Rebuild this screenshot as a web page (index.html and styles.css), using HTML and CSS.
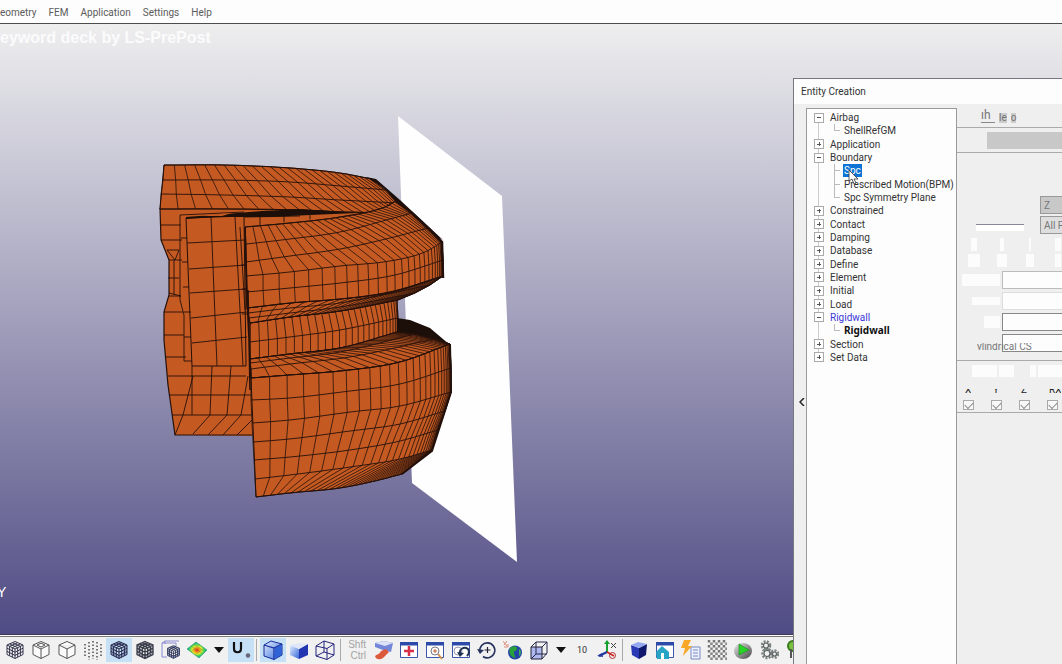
FILE: index.html
```html
<!DOCTYPE html>
<html lang="en">
<head>
<meta charset="utf-8">
<title>LS-PrePost</title>
<link rel="stylesheet" href="styles.css">
</head>
<body>
<nav class="menubar">
  <button class="menu-item">eometry</button>
  <button class="menu-item">FEM</button>
  <button class="menu-item">Application</button>
  <button class="menu-item">Settings</button>
  <button class="menu-item">Help</button>
</nav>

<main class="viewport">
  <h1 class="deck-title">eyword deck by LS-PrePost</h1>
  <svg class="model" id="model" width="560" height="560" viewBox="0 24 560 560" role="img" aria-label="Meshed part and rigid wall"></svg>
  <span class="axis-label">Y</span>
</main>

<svg class="defs" aria-hidden="true">
  <defs>
    <linearGradient id="blueFace" x1="0" y1="0" x2="1" y2="1"><stop offset="0" stop-color="#e4efff"/><stop offset="1" stop-color="#3568d8"/></linearGradient>
    <radialGradient id="fringe"><stop offset="0" stop-color="#f02010"/><stop offset=".3" stop-color="#f8a020"/><stop offset=".5" stop-color="#d8ec30"/><stop offset=".75" stop-color="#30d060"/><stop offset="1" stop-color="#2090e0"/></radialGradient>
    <linearGradient id="orb" x1="0" y1="0" x2="1" y2="1"><stop offset="0" stop-color="#e8e8e8"/><stop offset="1" stop-color="#444"/></linearGradient>
    <symbol id="cube" viewBox="0 0 20 20"><path d="M10 1.5 18 5v9.500L10 18.500 2 14.500V5zM2 5l8 4 8-4M10 9v9.500"/></symbol>
    <symbol id="grid" viewBox="0 0 20 20"><path d="M10 1.500 18 5v9.500L10 18.500 2 14.500V5zM2 5l8 4 8-4M10 9v9.500M4.600 6.300v9.500M7.300 7.700v9.500M12.700 7.700v9.500M15.400 6.300v9.500M2 8.200l8 4 8-4M2 11.400l8 4 8-4M7.300 2.700l8 3.600M4.600 3.900l8 3.700M12.700 2.700l-8 3.600M15.400 3.900l-8 3.700"/></symbol>
    <symbol id="win" viewBox="0 0 20 20"><path d="M1.500 2.500h17v15h-17z" fill="#fff" stroke="#3c55a8"/><path d="M1 2h18v3.500H1z" fill="#2c4aa8" stroke="none"/></symbol>
  </defs>
</svg>

<footer class="toolbar">
  <button class="tool" aria-label="Mesh"><svg class="ico ink"><use href="#grid"/></svg></button>
  <button class="tool" aria-label="Feature edges"><svg class="ico grey" viewBox="0 0 20 20"><path d="M10 1.500 18 5v9.500L10 18.500 2 14.500V5zM2 5l8 4 8-4M10 9v9.500M6 5l4-1.800L14 5l-4 2z"/></svg></button>
  <button class="tool" aria-label="Hidden line"><svg class="ico grey"><use href="#cube"/></svg></button>
  <button class="tool" aria-label="Nodes"><svg class="ico dots" viewBox="0 0 20 20"><path d="M2 4v14M6 2v18M10 1v18M14 2v18M18 4v14"/></svg></button>
  <button class="tool active" aria-label="Shaded mesh"><svg class="ico shade"><use href="#grid"/></svg></button>
  <button class="tool" aria-label="Shrunk elements"><svg class="ico shade-dark"><use href="#grid"/></svg></button>
  <button class="tool" aria-label="Transparent mesh"><svg class="ico shade" viewBox="0 0 20 20"><path d="M1 17V3l3-2h14M1 3h14v3M4 1v3M1 17h5" fill="none" stroke="#8a8cd0"/><use href="#grid" x="5" y="4" width="15" height="16"/></svg></button>
  <button class="tool" aria-label="Fringe"><svg class="ico" viewBox="0 0 20 20"><path d="M0 9 9 2l11 8-8 8z" fill="url(#fringe)" stroke="#309860" stroke-width=".6"/><path d="m4 6 12 8M7 4l11 8M4 12l9-8M8 15l9-7" stroke="#3a8050" stroke-width=".3"/></svg></button>
  <button class="tool narrow" aria-label="More"><svg class="caret" viewBox="0 0 10 6"><path d="M0 0h10L5 6z"/></svg></button>
  <button class="tool active" aria-label="Unreference"><svg class="ico" viewBox="0 0 20 20"><path d="M3 2v6.500c0 5 7 5 7 0V2" fill="none" stroke="#111" stroke-width="2.200"/><circle cx="17" cy="15.500" r="2.200" fill="#667"/></svg></button>
  <span class="sep"></span>
  <button class="tool active" aria-label="Perspective"><svg class="ico" viewBox="0 0 20 20"><path d="M1 5 8 1l11 3v11l-8 4.500L1 16z" fill="url(#blueFace)" stroke="#152a9a"/><path d="m1 5 10 3 8-4-8 4v11.500" fill="none" stroke="#152a9a" stroke-width="1.200"/><path d="m11.500 8.500 7-4v10.500l-7 4z" fill="#2f63d6"/></svg></button>
  <button class="tool" aria-label="Solid"><svg class="ico" viewBox="0 0 20 20"><path d="m1 5 9 4v10l-9-4z" fill="url(#blueFace)"/><path d="m10 9 9-5v11l-9 4z" fill="#2136b0"/><path d="m1 5 9 4 9-5-9-1z" fill="#dfe6f8"/></svg></button>
  <button class="tool" aria-label="Wireframe"><svg class="ico" viewBox="0 0 20 20"><path d="M1 6 9 1l10 3v11l-7 4.500L1 16zM1 6l11 2.500L19 4M12 8.500v11M9 1v11l10 3M9 12l-8 4" fill="none" stroke="#24247c"/></svg></button>
  <span class="sep"></span>
  <span class="keys">Shft<br>Ctrl</span>
  <button class="tool" aria-label="Clear highlight"><svg class="ico" viewBox="0 0 20 20"><path d="m2 3 9-2 9 2-2 9-8-2-8-3z" fill="#7386d8"/><path d="m2 3 9-2 9 2-8 3z" fill="#dce2f8"/><path d="M2 16c2-2 4-1 6-5l5-2 3 3-6 6c-3 2-7 2-8-2z" fill="#dc5a3a"/></svg></button>
  <button class="tool" aria-label="Pan"><svg class="ico" viewBox="0 0 20 20"><use href="#win"/><path d="M10 6v10M5 11h10" stroke="#d83048" stroke-width="2.500"/></svg></button>
  <button class="tool" aria-label="Zoom in"><svg class="ico" viewBox="0 0 20 20"><use href="#win"/><circle cx="10" cy="11" r="4" fill="#fff" stroke="#778"/><path d="M10 9v4M8 11h4" stroke="#c06030"/><path d="m13 14 4 5" stroke="#d09050" stroke-width="2"/></svg></button>
  <button class="tool" aria-label="Zoom back"><svg class="ico" viewBox="0 0 20 20"><use href="#win"/><circle cx="7" cy="11" r="4" fill="#fff" stroke="#99a"/><path d="M9 14c-1-5 4-8 8-5 2 3 1 5-1 7" fill="none" stroke="#203050" stroke-width="2"/><path d="m6 12 3 5 4-4z" fill="#203050"/></svg></button>
  <button class="tool" aria-label="Rotate"><svg class="ico" viewBox="0 0 20 20"><path d="M3 12a7.500 7.500 0 1 1 3 4.500" fill="none" stroke="#26325e" stroke-width="1.600"/><path d="m0 9 3 5 4-4z" fill="#26325e"/><path d="M10.500 7v6M7.500 10h6" stroke="#223" stroke-width="1.200"/></svg></button>
  <button class="tool" aria-label="Spin"><svg class="ico" viewBox="0 0 20 20"><path d="m0 1 4 5M4 1 1 5M1 7h4v-3" fill="none" stroke="#e08070" stroke-width=".9"/><circle cx="12" cy="12.500" r="7" fill="#2444a8"/><path d="M7 8c3-3 8-2 7 1s-3 1-3 4 2 2 1 5c-4-1-7-5-5-10z" fill="#28a03c"/><path d="M16 9c3 1 2 6 0 7z" fill="#3cb050"/></svg></button>
  <button class="tool" aria-label="View"><svg class="ico" viewBox="0 0 20 20"><path d="M2 7h11v12H2z" fill="#aeb8ee" stroke="#223" /><path d="m2 7 5-5h11v11l-5 6M13 7l5-5M7 2v12h11M7 14l-5 5" fill="none" stroke="#25264c"/></svg></button>
  <button class="tool narrow" aria-label="More views"><svg class="caret" viewBox="0 0 10 6"><path d="M0 0h10L5 6z"/></svg></button>
  <span class="step">10</span>
  <button class="tool" aria-label="Axes"><svg class="ico" viewBox="0 0 20 20"><path d="M10 1v11" stroke="#18a030" stroke-width="2"/><path d="m7 4 3-4 3 4z" fill="#18a030"/><path d="m10 12-8 4" stroke="#2038a0" stroke-width="2.200"/><path d="m0 16 5-3 1 4z" fill="#2038a0"/><path d="m10 12 7 4" stroke="#d02020" stroke-width="1.500"/><path d="m14 3 5 5M19 3l-5 5" stroke="#444"/><circle cx="15.500" cy="15.500" r="3" fill="none" stroke="#b03030"/></svg></button>
  <span class="sep"></span>
  <button class="tool" aria-label="Solid block"><svg class="ico" viewBox="0 0 20 20"><path d="m2 5 8 3v11l-7-4z" fill="#2a3ab4"/><path d="m10 8 8-4-1 11-7 4z" fill="#10186e"/><path d="m2 5 7-3 9 2-8 4z" fill="#93a8f0"/></svg></button>
  <button class="tool" aria-label="Home view"><svg class="ico" viewBox="0 0 20 20"><use href="#win"/><path d="m1 12 6-6 7 6v7H2z" fill="#28a4c4"/><path d="M6 13h3v6H6z" fill="#fff"/></svg></button>
  <button class="tool" aria-label="Quick list"><svg class="ico" viewBox="0 0 20 20"><path d="M10 7h9v12h-9z" fill="#eef2ff" stroke="#7888c0"/><path d="M12 10h5M12 13h5M12 16h5" stroke="#7888c0"/><path d="M3 0h7L7 6h4L2 16l2-8H0z" fill="#f8a828"/></svg></button>
  <button class="tool" aria-label="Checker"><svg class="ico" viewBox="0 0 20 20"><path d="M2 0v20M7 0v20M12 0v20M17 0v20" stroke="#777" stroke-width="2.500" stroke-dasharray="2.500 2.500"/><path d="M4.500 2.500v18M9.500 2.500v18M14.500 2.500v18M19.500 2.500v18" stroke="#888" stroke-width="2.500" stroke-dasharray="2.500 2.500"/></svg></button>
  <button class="tool" aria-label="Run"><svg class="ico" viewBox="0 0 20 20"><ellipse cx="10" cy="11" rx="9" ry="8" fill="url(#orb)"/><path d="m6 4 10 6-10 5z" fill="#28d428" stroke="#108a18" stroke-width=".6"/></svg></button>
  <button class="tool" aria-label="Settings"><svg class="ico" viewBox="0 0 20 20" fill="none" stroke="#7c8484"><g stroke-width="2.600" stroke-dasharray="2 1.200"><circle cx="7" cy="5.500" r="4"/><circle cx="8" cy="13.500" r="4.500"/><circle cx="15.500" cy="14" r="3.500"/></g><g stroke="#59625f" stroke-width="1.200"><circle cx="7" cy="5.500" r="2.500"/><circle cx="8" cy="13.500" r="3"/><circle cx="15.500" cy="14" r="2"/></g></svg></button>
  <button class="tool" aria-label="Refresh"><svg class="ico" viewBox="0 0 20 20"><circle cx="8" cy="6" r="5" fill="#7cc040" stroke="#357a18" stroke-width="2"/><path d="M6 9v9" stroke="#555" stroke-width="2"/></svg></button>
</footer>

<section class="dialog" aria-label="Entity Creation">
  <header class="dialog-title">Entity Creation</header>
  <div class="dialog-body">
    <button class="collapse" aria-label="Collapse"><svg width="6" height="8" viewBox="0 0 6 8"><path d="M5 0 1 4l4 4" fill="none" stroke="#222" stroke-width="1.500"/></svg></button>
    <div class="tree-box">
      <ul class="tree">
        <li class="node open">Airbag</li>
        <li class="leaf last">ShellRefGM</li>
        <li class="node">Application</li>
        <li class="node open">Boundary</li>
        <li class="leaf"><span class="selected">Spc</span></li>
        <li class="leaf">Prescribed Motion(BPM)</li>
        <li class="leaf last">Spc Symmetry Plane</li>
        <li class="node">Constrained</li>
        <li class="node">Contact</li>
        <li class="node">Damping</li>
        <li class="node">Database</li>
        <li class="node">Define</li>
        <li class="node">Element</li>
        <li class="node">Initial</li>
        <li class="node">Load</li>
        <li class="node open current">Rigidwall</li>
        <li class="leaf last bold">Rigidwall</li>
        <li class="node">Section</li>
        <li class="node">Set Data</li>
      </ul>
    </div>
    <form class="form">
      <div class="mode"><span class="ghost-a">ıh</span><span class="ghost-b">le</span><span class="ghost-b">o</span></div>
      <div class="band"><span class="band-fill"></span></div>
      <div class="pick">
        <span class="slot"></span>
        <div class="pick-buttons"><button type="button" class="grey-btn">Z</button><button type="button" class="grey-btn pale">All F</button></div>
      </div>
      <div class="chips"><i class="chip w6"></i><i class="chip w4"></i><i class="chip w2"></i><i class="chip w6"></i></div>
      <div class="chips"><i class="chip w12"></i><i class="chip w10"></i><i class="chip w8"></i><i class="chip w6"></i></div>
      <div class="fields">
        <span class="blank b38"></span><input class="field" aria-label="ID">
        <span class="blank b28 low"></span><input class="field light" aria-label="Set">
        <span class="blank b16"></span><input class="field dark" aria-label="Label">
        <span></span><input class="field dark" aria-label="Coordinate system" id="cs">
      </div>
      <label class="cs-label" for="cs">ylindrical CS</label>
      <div class="blanks"><span class="blank b28"></span><span class="blank b18"></span><span class="blank gap b6"></span><span class="blank b28"></span></div>
      <div class="dofs">
        <label class="dof"><span class="dof-name">X</span><input type="checkbox" checked disabled></label>
        <label class="dof"><span class="dof-name">Y</span><input type="checkbox" checked disabled></label>
        <label class="dof"><span class="dof-name">Z</span><input type="checkbox" checked disabled></label>
        <label class="dof"><span class="dof-name">RX</span><input type="checkbox" checked disabled></label>
      </div>
    </form>
  </div>
  <svg class="pointer" width="12" height="17" viewBox="0 0 12 17"><path d="M1 1v11l3-2 2 5 2-1-2-4h4z" fill="#fff" stroke="#333" stroke-width=".8"/></svg>
</section>
<script src="mesh.js"></script>
</body>
</html>
```

FILE: styles.css
```css
* { box-sizing: border-box; }
body {
  margin: 0;
  height: 100vh;
  display: flex;
  flex-direction: column;
  overflow: hidden;
  position: relative;
  font-family: Roboto, "Noto Sans", sans-serif;
  font-size: 10px;
  color: #333;
  background: #f0f0f0;
}
button { font: inherit; color: inherit; border: 0; background: none; padding: 0; }

.menubar {
  display: flex;
  gap: 12px;
  height: 24px;
  align-items: center;
  padding-top: 2px;
  background: #fdfdfd;
  border-bottom: 1px solid #4c4c4c;
  color: #5c5c5c;
}

.viewport {
  flex: 1;
  min-height: 0;
  position: relative;
  overflow: hidden;
  background: linear-gradient(#eeeeef, #4f4b84);
}
.deck-title {
  position: absolute;
  margin: 0;
  top: 4px;
  left: 0;
  font: bold 16px/20px "Liberation Sans", sans-serif;
  color: #fbfbfb;
  white-space: nowrap;
}
.model { display: block; }
.axis-label {
  position: absolute;
  left: -3px;
  bottom: 34px;
  font: 14px/16px "Liberation Sans", sans-serif;
  color: #fff;
}
.defs { position: absolute; width: 0; height: 0; }

.toolbar {
  display: flex;
  align-items: center;
  height: 30px;
  padding-left: 2px;
  background: #f1f1f1;
  border-top: 1px solid #3c3a55;
  box-shadow: inset 0 1px #fff, inset 0 2px #777;
}
.tool {
  flex: none;
  width: 26px;
  height: 24px;
  display: flex;
  align-items: center;
  justify-content: center;
}
.tool.narrow { width: 18px; }
.tool.active { background: #c6e1f6; }
.ico { width: 20px; height: 20px; }
.caret { width: 10px; height: 6px; fill: #111; }
.ink { fill: #f6f6fa; stroke: #34364c; stroke-width: 1; }
.grey { fill: #fbfbfb; stroke: #555; stroke-width: 1; }
.dots { stroke: #333; stroke-width: 1.3; stroke-dasharray: 1.5 2; }
.shade { fill: #8e9cc4; stroke: #252a4a; stroke-width: 1; }
.shade-dark { fill: #aab0c0; stroke: #3a3c48; stroke-width: 1.3; }
.sep { flex: none; width: 1px; height: 22px; margin: 0 3px 0 2px; background: #aaa; }
.keys {
  width: 26px;
  padding-right: 4px;
  font: 10px/11px "Liberation Sans", sans-serif;
  color: #a4a4a4;
  text-align: right;
}
.step { width: 24px; text-align: center; font-size: 9px; }

.dialog {
  position: absolute;
  left: 793px;
  right: 0;
  top: 78px;
  bottom: 0;
  display: flex;
  flex-direction: column;
  background: #efefef;
  border: solid #77777f;
  border-width: 1px 0 0 1px;
}
.dialog-title {
  flex: none;
  height: 25px;
  line-height: 25px;
  padding-left: 7px;
  background: #fdfdfd;
}
.dialog-body { flex: 1; min-height: 0; display: flex; }
.collapse { width: 12px; padding: 36px 0 0 4px; }
.tree-box {
  flex: none;
  width: 151px;
  margin-top: 4px;
  background: #fdfdfd;
  border: 1px solid #999;
  border-bottom: 0;
}
.tree {
  margin: 2px 0 0;
  padding: 0;
  list-style: none;
  height: 253px;
  display: grid;
  grid-auto-rows: 1fr;
  background: linear-gradient(#ccc, #ccc) 11px 6px / 1px 240px no-repeat;
}
.node, .leaf {
  display: flex;
  align-items: center;
  line-height: 13px;
  white-space: nowrap;
}
.node { padding-left: 7px; }
.node::before {
  content: "";
  width: 8px;
  height: 8px;
  margin-right: 6px;
  border: 1px solid #aaa;
  background:
    linear-gradient(#555, #555) center / 4px 1px no-repeat,
    linear-gradient(#555, #555) center / 1px 4px no-repeat,
    #fff;
}
.node.open::before { background: linear-gradient(#555, #555) center / 4px 1px no-repeat, #fff; }
.leaf {
  padding-left: 37px;
  background:
    linear-gradient(#bbb, #bbb) 27px 50% / 6px 1px no-repeat,
    linear-gradient(#bbb, #bbb) 27px 0 / 1px 100% no-repeat;
}
.leaf.last {
  background:
    linear-gradient(#bbb, #bbb) 27px 50% / 6px 1px no-repeat,
    linear-gradient(#bbb, #bbb) 27px 0 / 1px 50% no-repeat;
}
.current { color: #3a36d8; }
.bold { font-family: "Noto Sans", sans-serif; font-weight: bold; color: #111; }
.selected { background: #0b74d4; color: #fff; padding: 0 1px; margin-left: -1px; }
.pointer { position: absolute; left: 54px; top: 90px; }

.form { flex: 1; min-width: 0; overflow: hidden; color: #777; }
.mode {
  display: flex;
  gap: 4px;
  align-items: flex-end;
  height: 24px;
  padding: 0 0 4px 24px;
  border-bottom: 1px solid #aaa;
}
.ghost-a { width: 14px; line-height: 13px; font-size: 12px; border-bottom: 1px solid #888; }
.ghost-b { line-height: 10px; background: #ccc; }
.band { height: 25px; padding: 4px 0 3px 30px; border-bottom: 1px solid #aaa; }
.band-fill { display: block; height: 100%; background: #c8c8c8; }
.pick { display: flex; justify-content: space-between; padding: 43px 0 4px 19px; }
.slot { flex: none; width: 48px; height: 7px; margin-top: 28px; border-top: 1px solid #889; background: #fff; }
.pick-buttons { width: 22px; display: grid; gap: 2px; }
.grey-btn {
  height: 18px;
  overflow: hidden;
  padding-left: 3px;
  text-align: left;
  white-space: nowrap;
  background: #c8c8c8;
  border: solid #999;
  border-width: 1px 0 1px 1px;
}
.pale { background: #dedede; }
.chips { display: grid; grid-template-columns: repeat(4, 28px); justify-items: center; height: 16px; padding-left: 3px; }
.chip { height: 13px; background: #fcfcfc; }
.w2 { width: 2px; } .w4 { width: 4px; } .w6 { width: 6px; } .w8 { width: 8px; } .w10 { width: 10px; } .w12 { width: 12px; }
.fields {
  display: grid;
  grid-template-columns: 43px 1fr;
  column-gap: 2px;
  row-gap: 3px;
  justify-items: end;
  align-items: center;
  padding-top: 1px;
}
.field { width: 100%; min-width: 0; height: 18px; border: solid #bbb; border-width: 1px 0 1px 1px; background: #fdfdfd; padding: 0; }
.light { border-color: #ddd; }
.dark { border-color: #888; }
.blank { display: block; height: 12px; background: #fcfcfc; }
.low { height: 8px; }
.b6 { width: 6px; } .b16 { width: 16px; } .b18 { width: 18px; } .b28 { width: 28px; } .b38 { width: 38px; }
.cs-label {
  display: flex;
  align-items: center;
  position: relative;
  height: 7px;
  margin: -9px 0 0 20px;
  line-height: 10px;
  overflow: hidden;
  white-space: nowrap;
}
.blanks { display: flex; gap: 2px; padding: 4px 0 0 15px; margin-top: 10px; border-top: 1px solid #aaa; }
.gap { margin-left: 14px; }
.dofs { display: grid; grid-template-columns: repeat(4, 28px); padding: 12px 0 2px 6px; border-bottom: 1px solid #aaa; }
.dof { display: grid; justify-items: start; gap: 6px; }
.dof-name { display: flex; align-items: flex-end; height: 5px; line-height: 8px; overflow: hidden; color: #222; padding-left: 2px; }
.dof input {
  appearance: none;
  width: 11px;
  height: 10px;
  margin: 0;
  border: 1px solid #aaa;
  background: #f8f8f8;
}
.dof input::before {
  content: "";
  display: block;
  width: 7px;
  height: 4px;
  margin: 1px;
  border: solid #888;
  border-width: 0 0 1px 1px;
  transform: rotate(-45deg);
}
```

FILE: mesh.js
```js
const NS = "http://www.w3.org/2000/svg";
const model = document.getElementById("model");
const COPPER = "#c45a22";

function add(tag, attrs) {
  const el = document.createElementNS(NS, tag);
  for (const key in attrs) el.setAttribute(key, attrs[key]);
  model.appendChild(el);
}
function poly(points, fill, stroke) {
  add("polygon", { points, fill, stroke: stroke || "none", "stroke-width": 1 });
}
function lines(d, width) {
  add("path", { d, fill: "none", stroke: "#24100a", "stroke-width": width || 0.9 });
}

// Height of a ring at x, cubic between its key points.
function heightAt(ring, x) {
  const p = ring.pts;
  let i = 0;
  while (i < p.length - 2 && x > p[i + 1][0]) i++;
  const slope = (a, b) => (b[1] - a[1]) / (b[0] - a[0]);
  const s = slope(p[i], p[i + 1]);
  const m0 = i > 0 ? (slope(p[i - 1], p[i]) + s) / 2 : s;
  const m1 = i < p.length - 2 ? (s + slope(p[i + 1], p[i + 2])) / 2 : s;
  const h = p[i + 1][0] - p[i][0];
  const t = (x - p[i][0]) / h;
  return (2*t*t*t - 3*t*t + 1) * p[i][1] + (t*t*t - 2*t*t + t) * h * m0
    + (3*t*t - 2*t*t*t) * p[i + 1][1] + (t*t*t - t*t) * h * m1;
}
// Columns crowd together towards the right edge; power sets how strongly.
function sample(ring, n) {
  const a = ring.pts[0][0], b = ring.pts[ring.pts.length - 1][0];
  const out = [];
  for (let k = 0; k <= n; k++) {
    const x = a + (b - a) * (1 - Math.pow(1 - k / n, ring.power));
    out.push([x.toFixed(1), heightAt(ring, x).toFixed(1)]);
  }
  return out;
}
function surface(rings, n) {
  const s = rings.map(r => sample(r, n));
  const join = a => a.map(p => p.join(",")).join(" ");
  poly(join(s[0].concat(s.map(r => r[n]), s[s.length - 1].slice().reverse())), COPPER, "#24100a");
  s.forEach(r => lines("M" + join(r)));
  let d = "";
  for (let k = 0; k <= n; k++) d += "M" + s.map(r => r[k].join(",")).join("L");
  lines(d, 0.8);
}
const ring = (power, ...pts) => ({ power, pts });

// Rigid wall
poly("398,116 502,196 517,562 412,483", "#fefefe");

// Back shell
poly("164,165 160,208 161,240 169,260 169,295 164,312 164,340 168,385 175,435 252,436 300,300 300,168", COPPER);
lines("M160,208 161,240 169,260V295L164,312V340L168,385 175,435H252", 1.2);
poly("245,205 400,205 400,225 245,230", COPPER);
surface([
  ring(1.3, [164,165], [225,165], [290,168], [340,173], [372,179]),
  ring(1.5, [163,180], [225,180], [290,182], [340,186], [386,190]),
  ring(1.7, [161,194], [225,195], [290,197], [340,200], [398,203]),
  ring(1.9, [160,209], [225,209], [300,210], [345,212], [412,213])
], 26);
poly("366,177 376,179 400,200 443,240 425,230 396,202 384,188", "#1c0f0a");

// Left flank and inner faces
lines("M160,225h21M161,240h21M167,250h12l-4,10-8-10M169,260h13M168,278h11M169,296h12l-12-3M164,312h19M164,335h20M166,357h20M168,376h78M169,395h82M172,415h80M175,435 183,415 193,376M193,434 210,415 212,366M208,435 227,415 231,366M223,435 241,415 248,376M237,435 252,420M192,366v49M174,260v35M180,215V300l4,15V361h8");
poly("186,218 244,216 246,366 192,366", COPPER, "#24100a");
lines("M180,215 244,212M187,243 245,240M189,269 246,265M190,293 246,289M191,318 247,312M192,343 247,337M211,217 217,366M235,217 243,366M181,238h6M182,262h6M183,287h6M184,312h7M184,337h7M240,227 245,310M241,265h6M242,289h6M242,314h7");
lines("M260,216v10M284,216v8M310,214v7M245,217 300,216");
poly("186,219 186,217 225,214 262,211 300,209 358,213 310,215 270,217 215,217", "#1c0f0a");
poly("196,216 232,213 222,216", COPPER);

// Upper lobe: sloped top, rim, underside and neck
poly("245,227 355,214 400,330 250,360", COPPER);
surface([
  ring(1.5, [250,323], [290,317], [340,311], [397,300]),
  ring(1.6, [250,342], [290,337], [340,330], [398,318]),
  ring(1.6, [250,359], [290,354], [340,348], [398,335])
], 25);
surface([
  ring(2.2, [247,308], [290,303], [340,299], [390,292], [443,276]),
  ring(1.9, [248,313], [290,308], [340,303], [430,285]),
  ring(1.7, [249,318], [290,313], [340,307], [415,293]),
  ring(1.5, [250,323], [290,317], [340,311], [398,300])
], 27);
surface([
  ring(1.4, [245,227], [290,223], [340,217], [385,207], [396,201]),
  ring(1.7, [246,244], [290,239], [340,232], [390,219], [412,213]),
  ring(2.0, [246,262], [290,256], [340,249], [390,238], [428,228]),
  ring(2.4, [246,276], [290,272], [340,266], [390,261], [425,252], [442,242]),
  ring(2.4, [246,292], [290,288], [340,283], [395,275], [443,260]),
  ring(2.4, [247,308], [290,303], [340,299], [390,292], [443,276])
], 27);
lines("M396,201 412,213 428,228 442,242 443,278", 2.5);

// Lower lobe
poly("397,318 410,320 430,328 450,345 420,345 397,336", "#1c0f0a");
surface([
  ring(1.6, [250,359], [290,354], [340,348], [397,332]),
  ring(1.8, [250,363], [290,358], [340,352], [415,334]),
  ring(2.1, [251,369], [290,364], [350,357], [435,339]),
  ring(2.7, [251,378], [290,375], [350,370], [400,362], [450,344])
], 28);
surface([
  ring(2.7, [251,378], [290,375], [350,370], [400,362], [450,344]),
  ring(2.7, [251,400], [290,398], [350,391], [400,384], [451,368]),
  ring(2.7, [252,423], [290,420], [350,412], [400,406], [451,392]),
  ring(2.6, [253,442], [290,439], [350,431], [400,424], [445,411]),
  ring(2.5, [254,460], [290,457], [350,450], [400,441], [438,430]),
  ring(2.4, [255,479], [290,475], [350,467], [400,459], [432,450]),
  ring(1.4, [256,497], [290,493], [340,488], [375,481], [402,474])
], 28);
lines("M450,344 451,392 432,451 402,474", 2);
lines("M245,227 248,320 251,378M248,290 250,390", 1.5);
```
